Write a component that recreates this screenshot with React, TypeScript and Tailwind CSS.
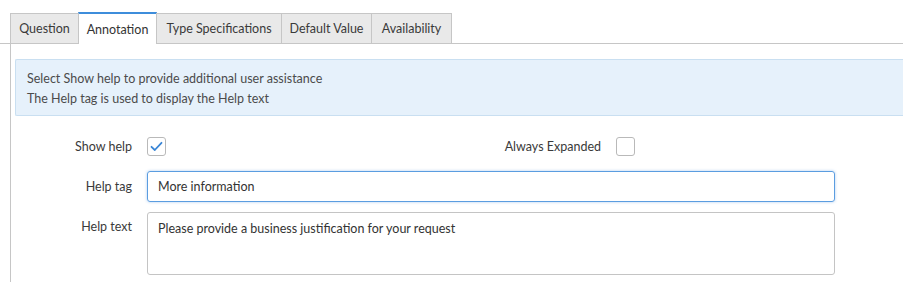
import { useState } from 'react';

const tabs = [
  { label: 'Question', w: 'w-[69px]' },
  { label: 'Annotation', w: 'w-[79px]' },
  { label: 'Type Specifications', w: 'w-[126px]' },
  { label: 'Default Value', w: 'w-[91px]' },
  { label: 'Availability', w: 'w-[81px]' },
];

function Checkbox({ checked }: { checked?: boolean }) {
  return (
    <div className="w-[19px] h-[19px] rounded-[3px] border border-[#b9b9b9] bg-white flex items-center justify-center">
      {checked && (
        <svg width="13" height="11" viewBox="0 0 13 11" fill="none">
          <path d="M1.5 5.8 L4.8 9 L11.5 1.8" stroke="#3a86d6" strokeWidth="1.8" strokeLinecap="round" strokeLinejoin="round" />
        </svg>
      )}
    </div>
  );
}

export default function App() {
  const [active] = useState(1);

  return (
    <div className="w-[903px] h-[282px] bg-white overflow-hidden text-[12.5px] text-[#3a3a3a]" style={{ fontFamily: 'Lato, "Open Sans", sans-serif' }}>
      {/* tab strip */}
      <div className="flex items-end pl-[10px] pt-[12px] border-b border-[#c6c6c6] h-[44px]">
        {tabs.map((tab, i) =>
          i === active ? (
            <div key={tab.label} className={`${tab.w} -ml-px h-[32px] -mb-px pt-[2px] bg-white border-t-2 border-t-[#3e8ddb] border-x border-x-[#c6c6c6] flex items-center justify-center text-[#333]`}>
              {tab.label}
            </div>
          ) : (
            <div key={tab.label} className={`${tab.w} h-[30px] pt-[2px] bg-[#e9e9e9] border-t border-x border-[#c6c6c6] -ml-px first:ml-0 flex items-center justify-center text-[#3a3a3a]`}>
              {tab.label}
            </div>
          )
        )}
      </div>

      {/* panel */}
      <div className="ml-[10px] border-l border-[#c6c6c6] h-[238px] pl-[4px] pt-[15px]">
        <div className="bg-[#e6f1fb] border border-[#c9dff1] rounded-l-[2px] border-r-0 h-[57px] pl-[11px] pt-[9px] leading-[20px] text-[#4b4b4b]">
          <div>Select Show help to provide additional user assistance</div>
          <div>The Help tag is used to display the Help text</div>
        </div>

        <div className="mt-[21px] flex items-center h-[19px]">
          <div className="w-[117px] text-right pt-[2px]">Show help</div>
          <div className="ml-[15px] w-[340px]">
            <Checkbox checked />
          </div>
          <div className="w-[114px] text-right pt-[2px]">Always Expanded</div>
          <div className="ml-[15px]">
            <Checkbox />
          </div>
        </div>

        <div className="mt-[15px] flex items-center">
          <div className="w-[117px] text-right pt-[2px]">Help tag</div>
          <div className="ml-[15px] w-[688px] h-[31px] pt-[2px] rounded-[3px] border border-[#5b9de0] shadow-[0_0_3px_rgba(70,140,220,0.45)] flex items-center pl-[10px] text-[#333]">
            More information
          </div>
        </div>

        <div className="mt-[10px] flex items-start">
          <div className="w-[117px] text-right pt-[6px]">Help text</div>
          <div className="ml-[15px] w-[688px] h-[63px] rounded-[3px] border border-[#c4c4c4] pl-[10px] pt-[7px] text-[#333]">
            Please provide a business justification for your request
          </div>
        </div>
      </div>
    </div>
  );
}
